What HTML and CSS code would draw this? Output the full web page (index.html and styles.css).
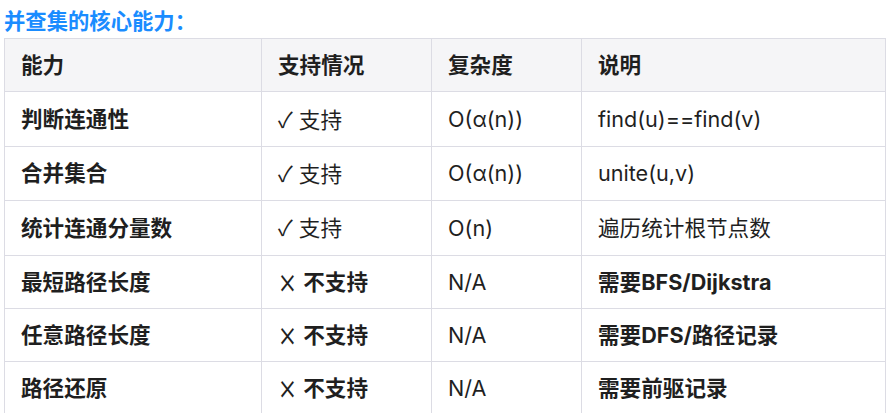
FILE: index.html
```html
<!DOCTYPE html>
<html lang="zh-CN">
<head>
<meta charset="utf-8">
<link rel="stylesheet" href="styles.css">
</head>
<body>
<h3 class="title">并查集的核心能力：</h3>
<table class="grid">
  <colgroup>
    <col class="c1"><col class="c2"><col class="c3"><col class="c4">
  </colgroup>
  <thead>
    <tr><th>能力</th><th>支持情况</th><th>复杂度</th><th>说明</th></tr>
  </thead>
  <tbody>
    <tr><td class="name">判断连通性</td><td><span class="yes">✓</span> 支持</td><td>O(α(n))</td><td>find(u)==find(v)</td></tr>
    <tr><td class="name">合并集合</td><td><span class="yes">✓</span> 支持</td><td>O(α(n))</td><td>unite(u,v)</td></tr>
    <tr><td class="name">统计连通分量数</td><td><span class="yes">✓</span> 支持</td><td>O(n)</td><td>遍历统计根节点数</td></tr>
    <tr><td class="name">最短路径长度</td><td><span class="no">✗</span> <strong>不支持</strong></td><td>N/A</td><td><strong>需要BFS/Dijkstra</strong></td></tr>
    <tr><td class="name">任意路径长度</td><td><span class="no">✗</span> <strong>不支持</strong></td><td>N/A</td><td><strong>需要DFS/路径记录</strong></td></tr>
    <tr><td class="name">路径还原</td><td><span class="no">✗</span> <strong>不支持</strong></td><td>N/A</td><td><strong>需要前驱记录</strong></td></tr>
  </tbody>
</table>
</body>
</html>
```

FILE: styles.css
```css
html, body {
  margin: 0;
  padding: 0;
  background: #ffffff;
}
body {
  padding: 0 4px;
  font-family: "Inter", "Noto Sans CJK SC", sans-serif;
  font-size: 21.6px;
  color: #1f1f1f;
}
.title {
  margin: 6px 0 4px 0;
  font-size: 21.33px;
  line-height: 28px;
  font-weight: 700;
  color: #1a8cff;
  font-family: "Noto Sans CJK SC", sans-serif;
}
.grid {
  border-collapse: collapse;
  width: 881px;
  table-layout: fixed;
}
.c1 { width: 257px; }
.c2 { width: 170px; }
.c3 { width: 150px; }
.c4 { width: 304px; }
.grid th,
.grid td {
  border: 1px solid #dcdce4;
  padding: 10.2px 16px;
  line-height: 32px;
  text-align: left;
  white-space: nowrap;
}
.grid th {
  background: #f5f5f7;
  font-weight: 700;
}
.grid td.name,
.grid strong {
  font-weight: 700;
}
.yes {
  font-family: "Noto Sans CJK SC", sans-serif;
}
.no {
  display: inline-block;
  font-family: "Inter", sans-serif;
  font-weight: 300;
  transform: scale(1.25, 1.6);
}
```
